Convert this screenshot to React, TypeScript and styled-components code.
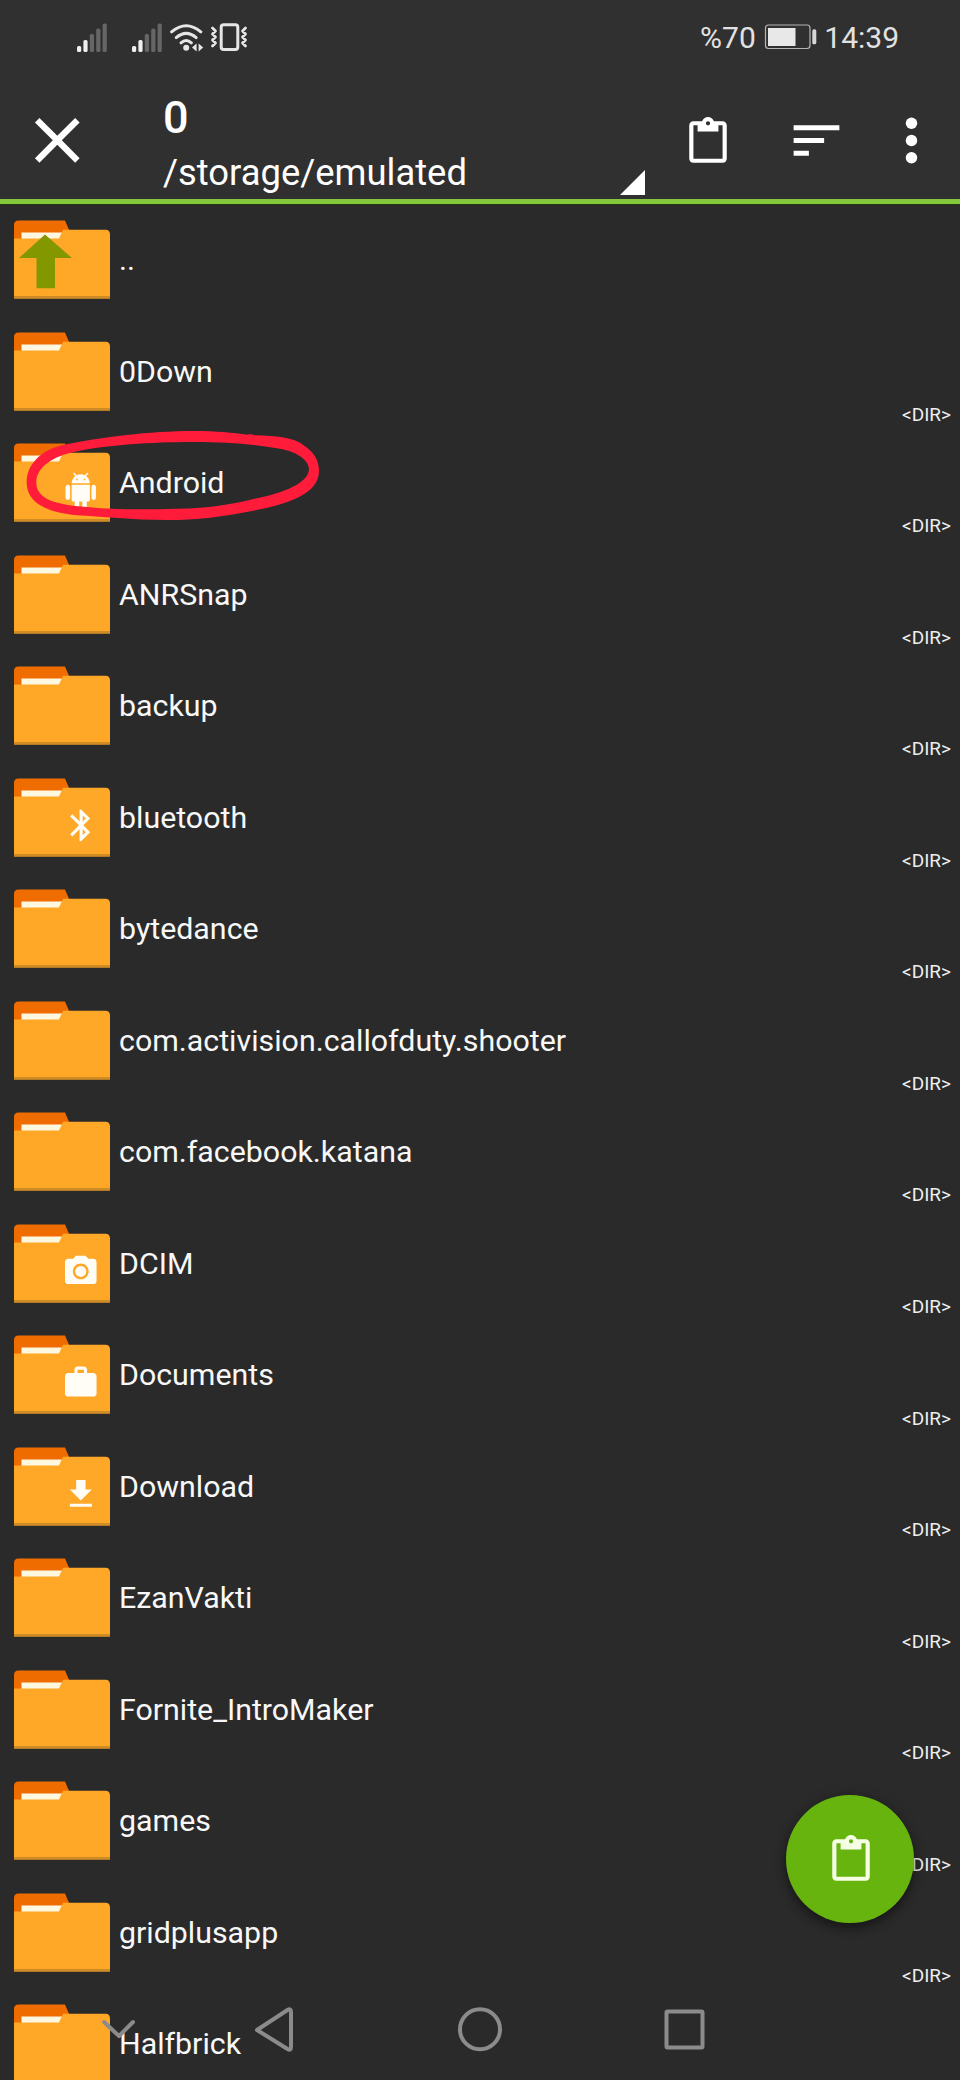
import React from "react";
import styled, { createGlobalStyle } from "styled-components";

const Global = createGlobalStyle`
  * { box-sizing: border-box; }
  body { margin: 0; background: #2a2a2a; overflow: hidden; }
`;

const Screen = styled.main`
  position: relative;
  width: 960px;
  height: 2080px;
  overflow: hidden;
  display: flex;
  flex-direction: column;
  background: #2a2a2a;
  color: #fff;
  font-family: Roboto, "Liberation Sans", sans-serif;
`;

const StatusBar = styled.div`
  height: 74px;
  flex: none;
  display: flex;
  align-items: center;
  justify-content: space-between;
  padding: 0 61px 0 76px;
  background: #303030;
  color: #e2e2e2;
`;

const StatusGroup = styled.div`
  display: flex;
  align-items: center;
`;

const StatusText = styled.span<{ $gap?: number }>`
  margin-left: ${(p) => p.$gap ?? 0}px;
  padding-top: 1px;
  font-size: 30px;
  line-height: 36px;
`;

const Glyph = styled.svg<{ $gap?: number }>`
  display: block;
  flex: none;
  margin-left: ${(p) => p.$gap ?? 0}px;
`;

const AppBar = styled.header`
  height: 125px;
  flex: none;
  display: flex;
  background: #303030;
`;

const Accent = styled.div`
  height: 6px;
  flex: none;
  background: linear-gradient(#84c63c 0 5px, #223410 5px 6px);
`;

const IconButton = styled.button<{ $width: number; $drop?: number }>`
  width: ${(p) => p.$width}px;
  height: 133px;
  padding: ${(p) => p.$drop ?? 0}px 0 0;
  border: 0;
  background: none;
  display: flex;
  flex: none;
  align-items: center;
  justify-content: center;
`;

const PathPicker = styled.div`
  flex: 1;
  display: flex;
  justify-content: space-between;
  align-items: flex-end;
  padding: 0 10px 4px 48px;
`;

const PathText = styled.div`
  display: flex;
  flex-direction: column;
  align-self: flex-start;
  padding-top: 18px;
`;

const FolderTitle = styled.h1`
  margin: 0;
  font-size: 45px;
  line-height: 52px;
  font-weight: 500;
`;

const FolderPath = styled.span`
  font-size: 36.4px;
  line-height: 58px;
  white-space: nowrap;
`;

const Actions = styled.div`
  display: flex;
  padding-right: 8px;
`;

const List = styled.ul`
  margin: -1.3px 0 0;
  padding: 0;
  list-style: none;
`;

const Row = styled.li`
  height: 111.54px;
  display: flex;
  align-items: center;
  padding: 0 9px 0 14px;
`;

const Name = styled.span`
  flex: 1;
  margin-left: 9px;
  padding-top: 1px;
  font-size: 30.35px;
  line-height: 36px;
  color: #f8f8f8;
`;

const Kind = styled.span`
  align-self: flex-end;
  padding-bottom: 1px;
  font-size: 19px;
  line-height: 22px;
  color: #eee;
`;

const Fab = styled.button`
  position: absolute;
  left: 786px;
  top: 1794.5px;
  width: 128px;
  height: 128px;
  padding: 2px 0 0 1px;
  border: 0;
  border-radius: 50%;
  display: flex;
  align-items: center;
  justify-content: center;
  background: #68b40e;
  box-shadow: 0 6px 10px rgba(0, 0, 0, 0.32), 0 1px 14px rgba(0, 0, 0, 0.2);
`;

const NavBar = styled.nav`
  position: absolute;
  left: 0;
  right: 0;
  bottom: 0;
  height: 102px;
`;

const Marker = styled.svg`
  position: absolute;
  left: 0;
  top: 200px;
  pointer-events: none;
`;

const Signal = ({ gap }: { gap?: number }) => (
  <Glyph $gap={gap} width="32" height="30" viewBox="0 0 32 30">
    {[
      [1, 24, 6],
      [7.4, 18, 12],
      [13.8, 12, 18],
      [20.2, 6.5, 23.5],
      [26.6, 1.5, 28.5],
    ].map(([x, y, h], i) => (
      <rect key={x} x={x} y={y} width="4.2" height={h} rx="1.6" fill={i < 2 ? "#efefef" : "#666"} />
    ))}
  </Glyph>
);

const Wifi = () => (
  <Glyph $gap={6} width="36" height="30" viewBox="168 21 36 30">
    <g fill="none" stroke="#e6e6e6" strokeWidth="3" strokeLinecap="round">
      <path d="M170.6 30.8Q185.2 18.6 199.8 30.8" />
      <path d="M175.2 36.6Q185.2 28.2 195.2 36.6" />
      <path d="M180 41.8Q185.2 37.2 190.4 41.8" />
    </g>
    <circle cx="185.2" cy="46.7" r="3" fill="#e6e6e6" />
    <path d="M195.6 42.5v8l-4.6-4zM197.6 42.5v8l4.6-4z" fill="#e6e6e6" />
  </Glyph>
);

const Vibrate = () => (
  <Glyph $gap={5} width="38" height="30" viewBox="209 21 38 30">
    <rect x="220.2" y="23.8" width="16.6" height="24.8" rx="2.5" fill="none" stroke="#e6e6e6" strokeWidth="3" />
    <path
      d="M211.5 27l3 3-3 3 3 3-3 3 3 3-3 3M244.500 27l-3 3 3 3-3 3 3 3-3 3 3 3"
      fill="none"
      stroke="#e6e6e6"
      strokeWidth="2.8"
      strokeLinecap="round"
      strokeLinejoin="round"
    />
  </Glyph>
);

const Battery = () => (
  <Glyph $gap={8} width="53" height="26" viewBox="763 24 53 26">
    <rect x="764.5" y="25" width="44.5" height="23.5" rx="3" fill="none" stroke="#b4b4b4" strokeWidth="1.2" />
    <rect x="767" y="28" width="27.5" height="18" fill="#e8e8e8" />
    <rect x="811.3" y="29.3" width="4" height="15" rx="1.6" fill="#d6d6d6" />
  </Glyph>
);

const Clipboard = ({ fill = "#fff" }: { fill?: string }) => (
  <svg width="50" height="50" viewBox="0 0 24 24" fill={fill}>
    <path d="M19 2h-4.18C14.4.84 13.3 0 12 0S9.6.84 9.18 2H5c-1.1 0-2 .9-2 2v16c0 1.1.9 2 2 2h14c1.1 0 2-.9 2-2V4c0-1.1-.9-2-2-2zm-7 0c.55 0 1 .45 1 1s-.45 1-1 1-1-.45-1-1 .45-1 1-1zm7 18H5V4h2v3h10V4h2v16z" />
  </svg>
);

type Badge = "up" | "android" | "bluetooth" | "camera" | "work" | "download";

const badgePaths: Record<Exclude<Badge, "up">, string> = {
  android:
    "M6 18c0 .55.45 1 1 1h1v3.5c0 .83.67 1.5 1.5 1.5s1.5-.67 1.5-1.5V19h2v3.5c0 .83.67 1.5 1.5 1.5s1.5-.67 1.5-1.5V19h1c.55 0 1-.45 1-1V8H6v10zM3.5 8C2.67 8 2 8.67 2 9.5v7c0 .83.67 1.5 1.5 1.5S5 17.33 5 16.5v-7C5 8.67 4.33 8 3.5 8zm17 0c-.83 0-1.5.67-1.5 1.5v7c0 .83.67 1.5 1.5 1.5s1.5-.67 1.5-1.5v-7c0-.83-.67-1.5-1.5-1.5zm-4.97-5.84l1.3-1.3c.2-.2.2-.51 0-.71-.2-.2-.51-.2-.71 0l-1.48 1.48C13.85 1.23 12.95 1 12 1c-.96 0-1.86.23-2.66.63L7.85.15c-.2-.2-.51-.2-.71 0-.2.2-.2.51 0 .71l1.31 1.31C6.97 3.26 6 5.01 6 7h12c0-1.99-.97-3.75-2.47-4.84zM10 5H9V4h1v1zm5 0h-1V4h1v1z",
  bluetooth:
    "M17.71 7.71L12 2h-1v7.59L6.41 5 5 6.41 10.59 12 5 17.59 6.41 19 11 14.41V22h1l5.71-5.71-4.3-4.29 4.3-4.29zM13 5.83l1.88 1.88L13 9.59V5.83zm1.88 10.46L13 18.17v-3.76l1.88 1.88z",
  camera:
    "M9 2L7.17 4H4c-1.1 0-2 .9-2 2v12c0 1.1.9 2 2 2h16c1.1 0 2-.9 2-2V6c0-1.1-.9-2-2-2h-3.17L15 2H9zm3 15c-2.76 0-5-2.24-5-5s2.24-5 5-5 5 2.24 5 5-2.24 5-5 5zM15.5 12a3.5 3.5 0 1 1-7 0a3.5 3.5 0 0 1 7 0z",
  work:
    "M20 6h-4V4c0-1.11-.89-2-2-2h-4c-1.11 0-2 .89-2 2v2H4c-1.11 0-2 .89-2 2v11c0 1.11.89 2 2 2h16c1.11 0 2-.89 2-2V8c0-1.11-.89-2-2-2zm-6 0h-4V4h4v2z",
  download: "M19 9h-4V3H9v6H5l7 7 7-7zM5 18v2h14v-2H5z",
};

// x offset, y offset and scale of each badge on the folder face
const badgeBox: Record<Exclude<Badge, "up">, [number, number, number]> = {
  android: [48.5, 29.7, 1.52],
  bluetooth: [48.2, 28.4, 1.58],
  camera: [47.8, 28.5, 1.58],
  work: [47.8, 28.4, 1.58],
  download: [48, 28.4, 1.57],
};

const Folder = ({ badge }: { badge?: Badge }) => (
  <svg width="96" height="79" viewBox="0 0 96 79">
    <path d="M0 24V5Q0 .5 4.5 .5H51L56 12V24Z" fill="#ef6c00" />
    <path d="M7.5 12.5H48.5L46 19H7.5Z" fill="#fff8e1" />
    <path d="M0 18.5H45L49 9.7H91.5Q96 9.7 96 14.5V78.5H0Z" fill="#ffa726" />
    <path d="M0 76H96V78.5H0Z" fill="#d08c24" />
    {badge === "up" && <path d="M31 14.5L58 38H41V68.3H22.5V38H5Z" fill="#839700" />}
    {badge && badge !== "up" && (
      <path
        d={badgePaths[badge]}
        fill="#fffdf6"
        transform={`translate(${badgeBox[badge][0]} ${badgeBox[badge][1]}) scale(${badgeBox[badge][2]})`}
      />
    )}
  </svg>
);

const entries: { name: string; badge?: Badge; kind?: string }[] = [
  { name: "..", badge: "up" },
  { name: "0Down", kind: "<DIR>" },
  { name: "Android", badge: "android", kind: "<DIR>" },
  { name: "ANRSnap", kind: "<DIR>" },
  { name: "backup", kind: "<DIR>" },
  { name: "bluetooth", badge: "bluetooth", kind: "<DIR>" },
  { name: "bytedance", kind: "<DIR>" },
  { name: "com.activision.callofduty.shooter", kind: "<DIR>" },
  { name: "com.facebook.katana", kind: "<DIR>" },
  { name: "DCIM", badge: "camera", kind: "<DIR>" },
  { name: "Documents", badge: "work", kind: "<DIR>" },
  { name: "Download", badge: "download", kind: "<DIR>" },
  { name: "EzanVakti", kind: "<DIR>" },
  { name: "Fornite_IntroMaker", kind: "<DIR>" },
  { name: "games", kind: "<DIR>" },
  { name: "gridplusapp", kind: "<DIR>" },
  { name: "Halfbrick" },
];

export default function App() {
  return (
    <Screen>
      <Global />
      <StatusBar>
        <StatusGroup>
          <Signal />
          <Signal gap={22.5} />
          <Wifi />
          <Vibrate />
        </StatusGroup>
        <StatusGroup>
          <StatusText>%70</StatusText>
          <Battery />
          <StatusText $gap={7.5}>14:39</StatusText>
        </StatusGroup>
      </StatusBar>
      <AppBar>
        <IconButton $width={115} aria-label="Close">
          <svg width="76.6" height="76.6" viewBox="0 0 24 24" fill="#fff">
            <path d="M19 6.41L17.59 5 12 10.59 6.41 5 5 6.41 10.59 12 5 17.59 6.41 19 12 13.41 17.59 19 19 17.59 13.41 12z" />
          </svg>
        </IconButton>
        <PathPicker>
          <PathText>
            <FolderTitle>0</FolderTitle>
            <FolderPath>/storage/emulated</FolderPath>
          </PathText>
          <svg width="25" height="25" viewBox="0 0 25 25">
            <path d="M25 0V25H0Z" fill="#fff" />
          </svg>
        </PathPicker>
        <Actions>
          <IconButton $width={106} $drop={2} aria-label="Paste">
            <Clipboard />
          </IconButton>
          <IconButton $width={110} aria-label="Sort">
            <svg width="61" height="61" viewBox="0 0 24 24" fill="#fff">
              <path d="M3 18h6v-2H3v2zM3 6v2h18V6H3zm0 7h12v-2H3v2z" />
            </svg>
          </IconButton>
          <IconButton $width={81} aria-label="More">
            <svg width="69" height="69" viewBox="0 0 24 24" fill="#fff">
              <circle cx="12" cy="6" r="2" />
              <circle cx="12" cy="12" r="2" />
              <circle cx="12" cy="18" r="2" />
            </svg>
          </IconButton>
        </Actions>
      </AppBar>
      <Accent />
      <List>
        {entries.map((e) => (
          <Row key={e.name}>
            <Folder badge={e.badge} />
            <Name>{e.name}</Name>
            {e.kind && <Kind>{e.kind}</Kind>}
          </Row>
        ))}
      </List>
      <Fab aria-label="Paste here">
        <Clipboard fill="#f6ffe6" />
      </Fab>
      <NavBar>
        <svg
          width="960"
          height="102"
          viewBox="0 1978 960 102"
          fill="none"
          stroke="#8b8b8b"
          strokeWidth="4"
          strokeLinejoin="round"
          strokeLinecap="round"
        >
          <path d="M104 2022L119 2036L133 2022" />
          <path d="M257 2030L287.5 2010Q291 2008 291 2012V2047Q291 2051 287.5 2049Z" />
          <circle cx="480" cy="2029.3" r="20" />
          <rect x="666.5" y="2011.5" width="36" height="36" rx="1" />
        </svg>
      </NavBar>
      <Marker width="340" height="340" viewBox="0 0 1020 1020">
        <path
          fill="#ff1c3b"
          fillRule="evenodd"
          d="M80 850C78 790 130 745 200 733C300 712 450 693 580 693C650 693 700 698 742 704L750 702L765 706C830 708 880 712 910 735C945 758 957 785 957 812C957 880 870 910 760 932C670 950 590 960 500 960C400 960 300 950 230 946C130 935 82 905 80 850ZM109 842C105 900 170 915 270 922C330 928 400 929 500 927C590 927 680 918 760 897C850 880 925 850 927 808C927 785 900 757 840 746C760 732 680 726 580 726C450 726 320 735 225 755C160 768 112 800 109 842Z"
        />
      </Marker>
    </Screen>
  );
}
